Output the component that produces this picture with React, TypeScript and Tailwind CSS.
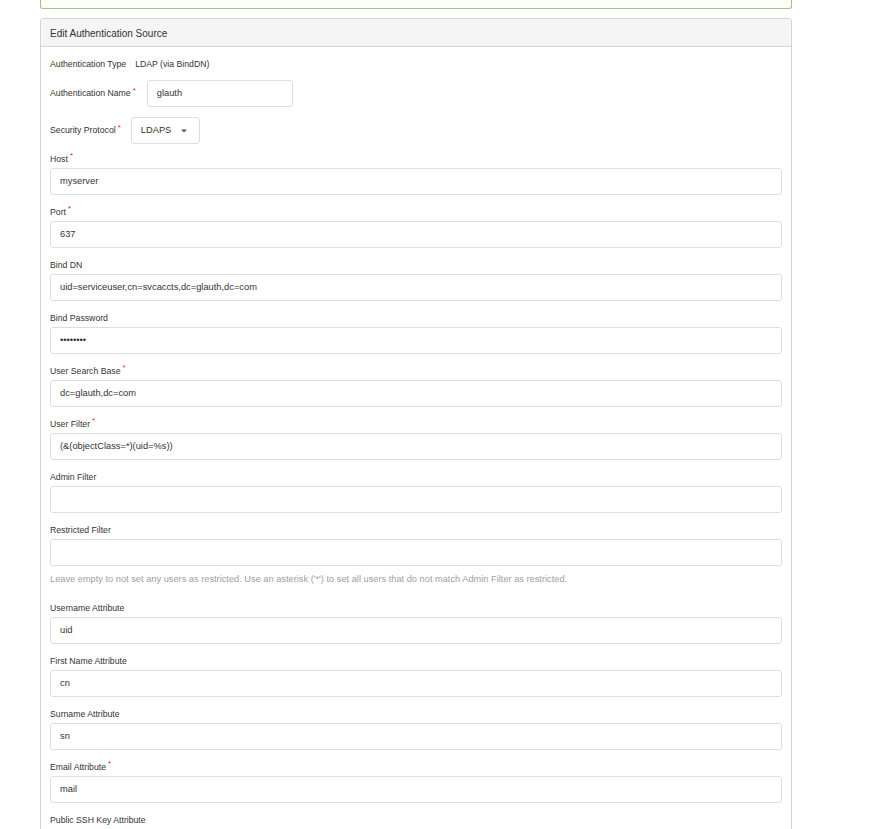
const font = { fontFamily: '"Liberation Sans", Arial, sans-serif' };

type Field = { label: string; value: string; required?: boolean; help?: string };

const fields: Field[] = [
  { label: "Host", value: "myserver", required: true },
  { label: "Port", value: "637", required: true },
  { label: "Bind DN", value: "uid=serviceuser,cn=svcaccts,dc=glauth,dc=com" },
  { label: "Bind Password", value: "••••••••" },
  { label: "User Search Base", value: "dc=glauth,dc=com", required: true },
  { label: "User Filter", value: "(&(objectClass=*)(uid=%s))", required: true },
  { label: "Admin Filter", value: "" },
  {
    label: "Restricted Filter",
    value: "",
    help: "Leave empty to not set any users as restricted. Use an asterisk ('*') to set all users that do not match Admin Filter as restricted.",
  },
  { label: "Username Attribute", value: "uid" },
  { label: "First Name Attribute", value: "cn" },
  { label: "Surname Attribute", value: "sn" },
  { label: "Email Attribute", value: "mail", required: true },
  { label: "Public SSH Key Attribute", value: "" },
];

function Req() {
  return <span className="relative -top-[3px] ml-[2px] text-[8px] text-[#db2828]">*</span>;
}

function Label({ text, required }: { text: string; required?: boolean }) {
  return (
    <label className="flex h-[11px] items-center pt-[1px] text-[8.7px] leading-[10px] text-[#333333]">
      {text}
      {required && <Req />}
    </label>
  );
}

function Input({ value, className = "" }: { value: string; className?: string }) {
  return (
    <div
      className={`flex h-[27px] items-center rounded-[3px] border border-[#dedede] bg-white pl-[9px] text-[9.3px] text-[#333333] ${className}`}
    >
      {value}
    </div>
  );
}

export default function App() {
  return (
    <div className="min-h-screen bg-white" style={font}>
      <div className="ml-[40px] w-[752px]">
        {/* success message, scrolled off the top */}
        <div className="h-[9px] rounded-b-[3px] border-x border-b border-[#a3c293] bg-[#fcfff5]" />

        <div className="mt-[9px] rounded-[3px] border border-[#d4d4d5]">
          <div className="flex h-[28px] items-center border-b border-[#d4d4d5] bg-[#f5f5f5] px-[9px] pt-[2px] text-[10px] text-[#333333]">
            Edit Authentication Source
          </div>

          <div className="px-[9px] pt-[11px] pb-[20px]">
            <div className="mb-[8px] flex h-[14px] items-center text-[8.7px] text-[#333333]">
              <span>Authentication Type</span>
              <span className="ml-[9px]">LDAP (via BindDN)</span>
            </div>

            <div className="mb-[10px] flex items-center">
              <span className="pt-[1px] text-[8.7px] text-[#333333]">
                Authentication Name
                <Req />
              </span>
              <Input value="glauth" className="ml-[11px] w-[146px]" />
            </div>

            <div className="mb-[9px] flex items-center">
              <span className="pt-[1px] text-[8.7px] text-[#333333]">
                Security Protocol
                <Req />
              </span>
              <div className="ml-[10px] flex h-[27px] w-[69px] items-center justify-between rounded-[3px] border border-[#dedede] bg-white pl-[9px] pr-[12px] text-[9.3px] text-[#333333]">
                LDAPS
                <svg width="6" height="4" viewBox="0 0 6 4">
                  <path d="M0 0.5h6L3 3.5z" fill="#555" />
                </svg>
              </div>
            </div>

            {fields.map((f) => (
              <div key={f.label} className={f.help ? "mb-[18px]" : "mb-[11px]"}>
                <Label text={f.label} required={f.required} />
                <Input value={f.value} className="mt-[4px]" />
                {f.help && (
                  <p className="mt-[8px] h-[10px] whitespace-nowrap text-[9.25px] leading-[10px] text-[#a0a0a0]">{f.help}</p>
                )}
              </div>
            ))}
          </div>
        </div>
      </div>
    </div>
  );
}
